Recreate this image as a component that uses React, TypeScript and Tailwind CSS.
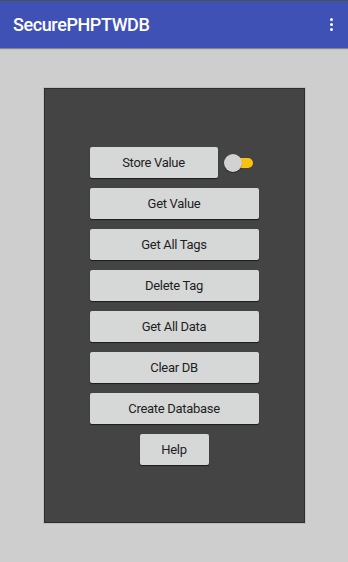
const buttons = ['Get Value', 'Get All Tags', 'Delete Tag', 'Get All Data', 'Clear DB', 'Create Database'];

function Btn({ label, className }: { label: string; className: string }) {
  return (
    <button
      className={`h-[31px] rounded-[2px] bg-[#d6d7d7] text-[13px] tracking-[-0.3px] text-[#1e1e1e] shadow-[0_1px_1px_rgba(0,0,0,0.6)] ${className}`}
    >
      {label}
    </button>
  );
}

export default function App() {
  return (
    <div
      className="w-[348px] h-[562px] bg-[#cecece] flex flex-col"
      style={{ fontFamily: 'Roboto, "Noto Sans", sans-serif' }}
    >
      <div className="h-[48px] shrink-0 bg-[#3f51b5] border-t border-[#4a5548] shadow-[0_1px_1px_rgba(0,0,0,0.35)] flex items-center justify-between pl-[13px] pr-[15px]">
        <span className="text-white text-[18px] font-medium tracking-[-0.4px]">SecurePHPTWDB</span>
        <div className="flex flex-col gap-[2px]">
          <span className="w-[3px] h-[3px] bg-white rounded-full" />
          <span className="w-[3px] h-[3px] bg-white rounded-full" />
          <span className="w-[3px] h-[3px] bg-white rounded-full" />
        </div>
      </div>
      <div className="pt-[39px] flex justify-center">
        <div className="w-[263px] h-[437px] bg-[#444] border border-[#bdbdbd] shadow-[inset_0_0_0_1px_#2e2e2e] flex flex-col items-center pt-[59px]">
          <div className="w-[169px] flex flex-col gap-[10px]">
            <div className="flex items-center gap-[6px]">
              <Btn label="Store Value" className="w-[128px]" />
              <div className="relative w-[29px] h-[18px]">
                <div className="absolute left-[8px] top-[4px] w-[21px] h-[10px] rounded-full bg-[#fbc111]" />
                <div className="absolute left-0 top-0 w-[18px] h-[18px] rounded-full bg-[#d2d2d2] shadow-[0_1px_1px_rgba(0,0,0,0.4)]" />
              </div>
            </div>
            {buttons.map((b) => (
              <Btn key={b} label={b} className="w-full" />
            ))}
            <div className="flex justify-center">
              <Btn label="Help" className="w-[69px]" />
            </div>
          </div>
        </div>
      </div>
    </div>
  );
}
